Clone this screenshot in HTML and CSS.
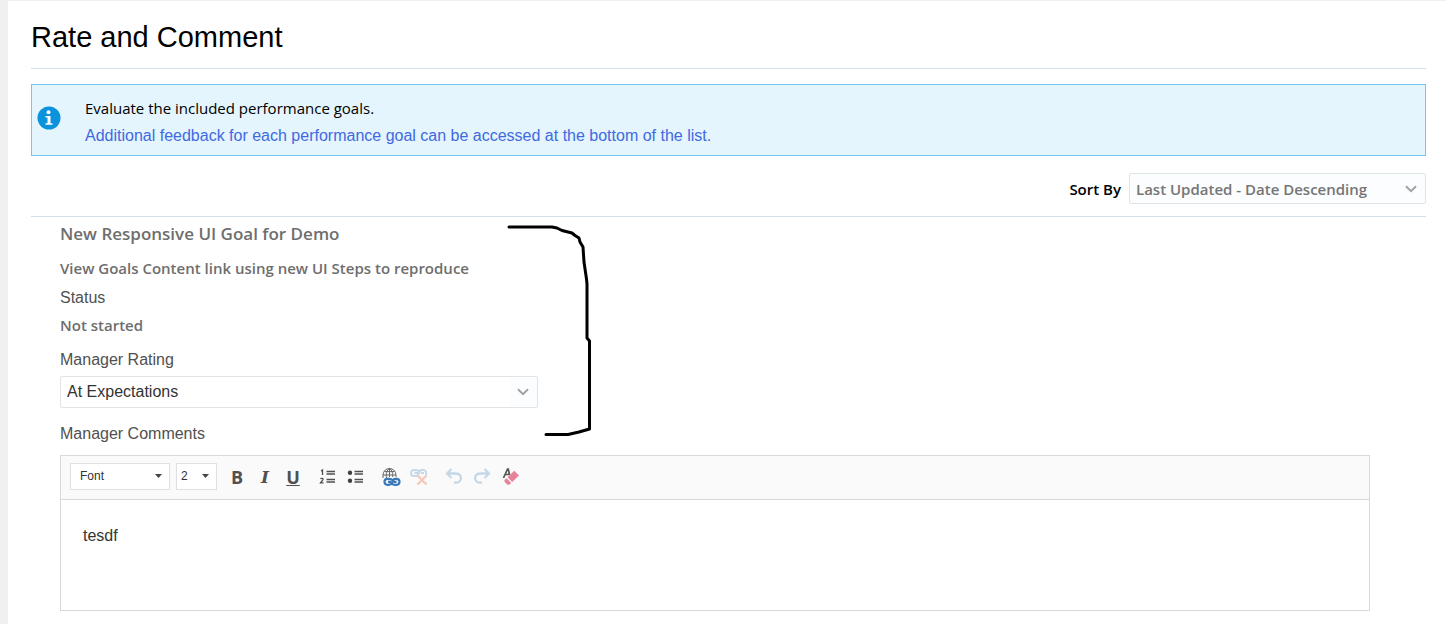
FILE: index.html
```html
<!DOCTYPE html>
<html lang="en">
<head>
  <meta charset="UTF-8">
  <meta name="viewport" content="width=device-width, initial-scale=1.0">
  <title>Rate and Comment</title>
  <link rel="stylesheet" href="styles.css">
</head>
<body>
  <main class="page">
    <h1>Rate and Comment</h1>

    <div class="notice">
      <svg class="notice-icon" viewBox="0 0 24 24" aria-hidden="true">
        <circle cx="12" cy="12" r="11.5" fill="#0a93dc"/>
        <circle cx="11.5" cy="6.3" r="2" fill="#fff"/>
        <path d="M8.5 10h5v7.2h2v1.6h-7v-1.6h2v-5.6h-2z" fill="#fff"/>
      </svg>
      <div class="notice-text">
        <p>Evaluate the included performance goals.</p>
        <p class="notice-extra">Additional feedback for each performance goal can be accessed at the bottom of the list.</p>
      </div>
    </div>

    <div class="sort-row">
      <label for="sortBy">Sort By</label>
      <div class="select sort-select">
        <select id="sortBy">
          <option>Last Updated - Date Descending</option>
        </select>
        <svg class="chevron" viewBox="0 0 12 8" aria-hidden="true"><path d="M1 1.2l5 5 5-5"/></svg>
      </div>
    </div>

    <section class="goal">
      <h2>New Responsive UI Goal for Demo</h2>
      <h3>View Goals Content link using new UI Steps to reproduce</h3>
      <p class="field-label">Status</p>
      <p class="field-value">Not started</p>

      <label class="field-label rating-label" for="rating">Manager Rating</label>
      <div class="select rating-select">
        <select id="rating">
          <option>At Expectations</option>
        </select>
        <svg class="chevron" viewBox="0 0 12 8" aria-hidden="true"><path d="M1 1.2l5 5 5-5"/></svg>
      </div>

      <label class="field-label comments-label" for="comments">Manager Comments</label>
      <div class="editor">
        <div class="toolbar">
          <div class="select tool-select font-select">
            <select aria-label="Font">
              <option>Font</option>
            </select>
            <svg class="arrow" viewBox="0 0 7 4" aria-hidden="true"><path d="M0 0h7L3.5 4z"/></svg>
          </div>
          <div class="select tool-select size-select">
            <select aria-label="Font size">
              <option>2</option>
            </select>
            <svg class="arrow" viewBox="0 0 7 4" aria-hidden="true"><path d="M0 0h7L3.5 4z"/></svg>
          </div>
          <div class="tools">
            <button type="button" class="bold" aria-label="Bold">B</button>
            <button type="button" class="italic" aria-label="Italic">I</button>
            <button type="button" class="underline" aria-label="Underline">U</button>
          </div>
          <div class="tools">
            <button type="button" aria-label="Numbered list">
              <svg viewBox="0 0 20 20" fill="none" stroke="#505050" stroke-width="1.3">
                <path d="M3 4l1.500-1v5M2.500 12c.5-1 3-1 2.500.6-.3.900-1.500 1.800-2.500 3.200h3"/>
                <path d="M8.500 4.500h8.500M8.500 7h8.500M8.500 12.500h8.500M8.500 15h8.500"/>
              </svg>
            </button>
            <button type="button" aria-label="Bulleted list">
              <svg viewBox="0 0 20 20">
                <circle cx="4" cy="5.800" r="2.200" fill="#404040"/>
                <circle cx="4" cy="13.800" r="2.200" fill="#404040"/>
                <path d="M8.500 4.500h8.500M8.500 7h8.500M8.500 12.500h8.500M8.500 15h8.500" stroke="#505050" stroke-width="1.3"/>
              </svg>
            </button>
          </div>
          <div class="tools">
            <button type="button" aria-label="Insert link">
              <svg viewBox="0 0 20 20" fill="none">
                <path d="M2 11V8a6.500 6.500 0 0 1 13 0v2M2 8h13M3.300 4.600h10.400M8.500 1.500V10M5.500 11C4.500 7 6 3 8.500 1.500C11 3 12.500 7 11.500 10" stroke="#666" stroke-width="1"/>
                <path d="M11.500 13.200Q10.500 11.800 8 11.800H6.500a3 3 0 0 0 0 6H8Q10 17.800 11 15.500Q12 11.800 14 11.800h1.500a3 3 0 0 1 0 6H14Q12 17.800 11 16.700M7 14.800h3M12.500 14.800h3" stroke="#3b78b8" stroke-width="2.200"/>
              </svg>
            </button>
            <button type="button" aria-label="Remove link">
              <svg viewBox="0 0 20 20" fill="none">
                <path d="M10 4.400Q9 3 7 3H5a3 3 0 0 0 0 6H7Q9 9 9.800 6.500Q10.800 3 13 3h1.500a3 3 0 0 1 2 5M5.500 6h3.500M12 6h3" stroke="#c6d8e8" stroke-width="1.900"/>
                <path d="M8.500 8.500l9 9M17.500 8.500l-9 9" stroke="#f6c9bb" stroke-width="2.400"/>
              </svg>
            </button>
          </div>
          <div class="tools">
            <button type="button" aria-label="Undo">
              <svg viewBox="0 0 20 20" fill="none" stroke="#c6d8e8" stroke-width="2.300">
                <path d="M7.500 2L3 6.500 7.500 11M3 6.500h8c8 0 7.500 9 1 9.200h-2"/>
              </svg>
            </button>
            <button type="button" aria-label="Redo">
              <svg viewBox="0 0 20 20" fill="none" stroke="#c6d8e8" stroke-width="2.300">
                <path d="M12.500 2L17 6.500 12.500 11M17 6.500H9c-8 0-7.500 9-1 9.200h2"/>
              </svg>
            </button>
            <button type="button" aria-label="Clear formatting">
              <svg viewBox="0 0 20 20">
                <path d="M3.500 11L7.500 2h.8l1.200 6M5 7.500h4.500" fill="none" stroke="#555" stroke-width="1.700"/>
                <path d="M14.200 3.800l4.800 4.700-6.800 6.500-4.700-4.800z" fill="#e8819a"/>
                <path d="M6.500 11.200l4.700 4.700-2 1.900H7.500l-3-3v-1.700z" fill="#e8819a"/>
              </svg>
            </button>
          </div>
        </div>
        <textarea id="comments">tesdf</textarea>
      </div>

      <svg class="bracket" viewBox="0 0 90 220" aria-hidden="true">
        <path d="M5 10H48L53 11L58 13.500L68 16L71 18.500L75 21L76 25L79 30L80 45L82.500 62L83 67V121L85.500 124V212L75 215L64 217.500H42"/>
      </svg>
    </section>
  </main>
</body>
</html>
```
FILE: styles.css
```css
* {
  margin: 0;
  padding: 0;
  box-sizing: border-box;
}
body {
  background: #fff;
  border-top: 1px solid #f0f0f0;
  border-left: 8px solid #f0f0f0;
  font-family: "Liberation Sans", Arial, sans-serif;
  font-size: 16px;
  color: #000;
  min-height: 100vh;
}
.page {
  padding: 18px 20px 12px 23px;
}
h1 {
  font-size: 29px;
  font-weight: normal;
  line-height: 36px;
  padding-bottom: 13px;
  border-bottom: 1px solid #d6dfe6;
}
.notice {
  display: flex;
  align-items: center;
  gap: 24px;
  margin-top: 15px;
  padding: 10px 5px 6px;
  background: #e4f5fd;
  border: 1px solid #76c5ec;
}
.notice-icon {
  width: 24px;
  height: 24px;
  margin-bottom: 8px;
}
.notice-text {
  line-height: 27px;
}
.notice-text p:first-child {
  font-family: "Open Sans", sans-serif;
  font-size: 15px;
}
.notice-text .notice-extra {
  color: #4169e1;
}
.sort-row {
  display: flex;
  justify-content: flex-end;
  align-items: center;
  gap: 8px;
  margin-top: 17px;
  padding-bottom: 12px;
  border-bottom: 1px solid #d6dfe6;
  font-family: "Open Sans", sans-serif;
  font-size: 15px;
  font-weight: 600;
}

/* selects */
.select {
  display: grid;
  align-items: center;
}
.select select,
.select svg {
  grid-area: 1 / 1;
}
.select select {
  appearance: none;
  width: 100%;
  height: 32px;
  padding: 0 30px 0 6px;
  border: 1px solid #dfe4e7;
  border-radius: 2px;
  background: #fff;
  font: inherit;
  color: #333;
}
.select svg {
  justify-self: end;
  pointer-events: none;
}
.chevron {
  width: 12px;
  height: 8px;
  margin-right: 9px;
  fill: none;
  stroke: #a0a3a5;
  stroke-width: 2;
}
.sort-select {
  width: 297px;
}
.sort-select select {
  height: 31px;
  background: #fbfdfe;
  color: #757575;
}
.rating-select {
  width: 478px;
  max-width: 100%;
}
.rating-select select {
  background: linear-gradient(to left, #fbfdfe 27px, #fff 27px);
}

/* goal */
.goal {
  position: relative;
  padding: 5px 56px 0 29px;
  line-height: 24px;
}
.goal h2,
.goal h3,
.field-value {
  font-family: "Open Sans", sans-serif;
  font-weight: 600;
  color: #6e6e6e;
}
.goal h2 {
  font-size: 17px;
}
.goal h3 {
  font-size: 15px;
  margin: 10px 0 6px;
}
.field-label {
  display: block;
  color: #505050;
}
.field-value {
  font-size: 15px;
  margin-top: 3px;
}
.rating-label {
  margin: 11px 0 4px;
}
.comments-label {
  margin: 14px 0 9px;
}

/* editor */
.editor {
  border: 1px solid #d9d9d9;
}
.toolbar {
  display: flex;
  align-items: center;
  height: 44px;
  padding: 0 9px 2px;
  background: #fafafa;
  border-bottom: 1px solid #d9d9d9;
}
.tool-select {
  margin-right: 6px;
  font-size: 12px;
}
.tool-select select {
  height: 27px;
  padding: 0 16px 2px 9px;
  border-color: #e0e0e0;
  border-radius: 0;
}
.font-select {
  width: 100px;
}
.size-select {
  width: 41px;
}
.size-select select {
  padding-left: 4px;
}
.arrow {
  width: 7px;
  height: 4px;
  margin-right: 8px;
  margin-bottom: 2px;
  fill: #444;
}
.tools {
  display: flex;
  gap: 8px;
  margin-left: 4px;
  margin-right: 11px;
}
.tools button {
  width: 20px;
  height: 24px;
  border: none;
  background: none;
  color: #505050;
  font: bold 18px/24px "Open Sans", sans-serif;
  cursor: pointer;
}
.tools button svg {
  display: block;
  width: 20px;
  height: 20px;
  margin: 2px 0;
}
.tools .italic {
  font-family: "DejaVu Serif", serif;
  font-style: italic;
  font-size: 17px;
}
.tools .underline {
  text-decoration: underline;
}
.editor textarea {
  display: block;
  width: 100%;
  height: 110px;
  padding: 24px 22px;
  border: none;
  outline: none;
  resize: none;
  background: #fff;
  font: inherit;
  color: #333;
}

/* hand-drawn mark over the goal details */
.bracket {
  position: absolute;
  top: 0;
  left: 473px;
  width: 90px;
  height: 220px;
  overflow: visible;
  fill: none;
  stroke: #000;
  stroke-width: 3;
  stroke-linecap: round;
  stroke-linejoin: round;
  pointer-events: none;
}
```
